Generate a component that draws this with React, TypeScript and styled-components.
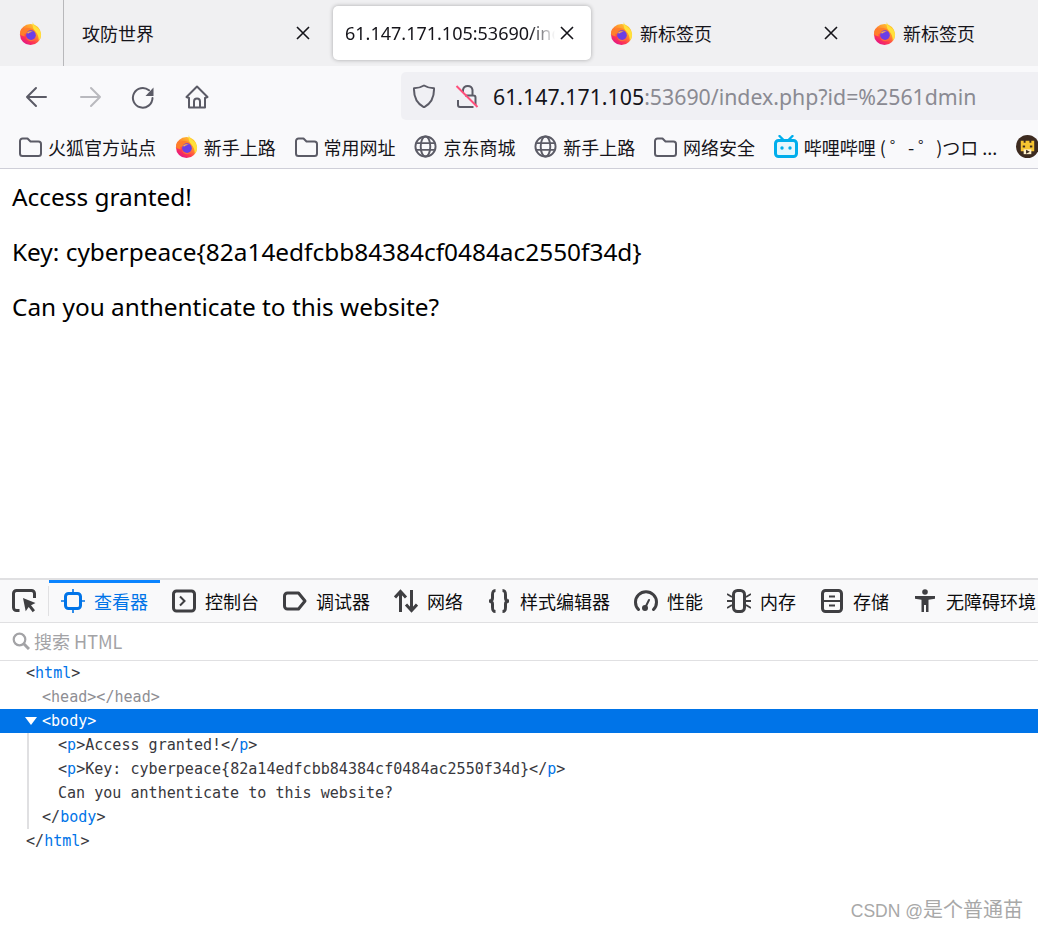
import * as React from 'react';
import styled, { createGlobalStyle } from 'styled-components';

const uiFont = '"Noto Sans", "Noto Sans CJK SC", sans-serif';
const cjkFont = '"Noto Sans CJK SC", "Noto Sans", sans-serif';
const monoFont = '"DejaVu Sans Mono", "Liberation Mono", monospace';

const GlobalStyle = createGlobalStyle`
	html, body {
		margin: 0;
		padding: 0;
		background: #fff;
	}
	svg {
		display: block;
		flex: none;
	}
`;

const Page = styled.div`
	position: relative;
	width: 1038px;
	height: 929px;
	overflow: hidden;
	display: flex;
	flex-direction: column;
	font-family: ${uiFont};
`;

/* browser chrome */
const TabStrip = styled.div`
	display: flex;
	flex: none;
	height: 66px;
	background: #f0f0f2;
	color: #15141a;
	font-family: ${cjkFont};
	font-size: 18px;
`;
const PinnedTab = styled.div`
	width: 64px;
	flex: none;
	display: flex;
	align-items: center;
	padding-left: 19px;
	box-sizing: border-box;
	border-right: 1px solid #b8b8bb;
`;
const Tab = styled.div<{ $width: number; $pad: number }>`
	width: ${(p) => p.$width}px;
	box-sizing: border-box;
	padding: 0 21px 0 ${(p) => p.$pad}px;
	display: flex;
	align-items: center;
	flex: none;
	gap: 7px;
`;
const ActiveTab = styled.div`
	width: 258px;
	height: 54px;
	margin: 6px 0 0 2px;
	padding: 0 17px 0 12px;
	box-sizing: border-box;
	flex: none;
	display: flex;
	align-items: center;
	background: #fff;
	border-radius: 5px;
	box-shadow: 0 0 4px rgba(0, 0, 0, 0.3);
`;
const ActiveTitle = styled.span`
	flex: 1;
	min-width: 0;
	margin-right: 5px;
	overflow: hidden;
	white-space: nowrap;
	font-family: ${uiFont};
	font-size: 18px;
	mask-image: linear-gradient(to right, #000 88%, transparent);
`;
const TabTitle = styled.span`
	flex: 1;
	white-space: nowrap;
`;
const NavBar = styled.div`
	display: flex;
	flex: none;
	align-items: flex-start;
	height: 66px;
	box-sizing: border-box;
	background: #f9f9fb;
	padding: 6px 0 0 24px;
`;
const NavIcons = styled.div`
	display: flex;
	gap: 29.7px;
	margin-top: 13px;
`;
const UrlBar = styled.div`
	width: 637px;
	height: 48px;
	margin-left: auto;
	padding-left: 11px;
	box-sizing: border-box;
	display: flex;
	align-items: center;
	gap: 19px;
	background: #f0f0f4;
	border-radius: 5px 0 0 5px;
`;
const UrlText = styled.div`
	margin-left: -5px;
	font-size: 21.3px;
	color: #15141a;
	white-space: nowrap;
`;
const UrlDim = styled.span`
	color: #8a8a92;
`;
const BookmarkBar = styled.div`
	display: flex;
	flex: none;
	align-items: center;
	gap: 18.8px;
	height: 37px;
	box-sizing: border-box;
	padding: 0 0 7px 19px;
	background: #f9f9fb;
	border-bottom: 1px solid #cfcfd8;
	color: #15141a;
	font-family: ${cjkFont};
	font-size: 18px;
	white-space: nowrap;
`;
const Bookmark = styled.div`
	display: flex;
	flex: none;
	align-items: center;
	gap: 6px;
`;

/* page body */
const Content = styled.div`
	flex: none;
	height: 409px;
	padding: 0 12px;
	box-sizing: border-box;
	font-size: 24.4px;
	color: #000;
`;
const Para = styled.p`
	margin: 0;
	height: 55px;
	line-height: 55px;
`;

/* devtools */
const DevTools = styled.div`
	flex: 1;
	display: flex;
	flex-direction: column;
	border-top: 2px solid #e0e0e2;
	background: #fff;
`;
const ToolBar = styled.div`
	display: flex;
	flex: none;
	height: 43px;
	box-sizing: border-box;
	background: #f9f9fa;
	border-bottom: 1px solid #e0e0e2;
	color: #0c0c0d;
	font-family: ${cjkFont};
	font-size: 18px;
	white-space: nowrap;
`;
const PickButton = styled.div`
	width: 49px;
	height: 30px;
	flex: none;
	margin-top: 6px;
	padding-left: 12px;
	box-sizing: border-box;
	display: flex;
	align-items: center;
	border-right: 1px solid #e0e0e2;
`;
const ToolTab = styled.div<{ $active?: boolean }>`
	display: flex;
	flex: none;
	align-items: center;
	gap: 9px;
	padding: 0 12px;
	color: ${(p) => (p.$active ? '#0074e8' : 'inherit')};
	box-shadow: ${(p) => (p.$active ? 'inset 0 3px 0 #0a84ff' : 'none')};
`;
const SearchRow = styled.div`
	display: flex;
	flex: none;
	align-items: center;
	gap: 4px;
	height: 38px;
	box-sizing: border-box;
	padding: 0 0 2px 12px;
	border-bottom: 1px solid #e0e0e2;
	color: #a3a3a6;
	font-family: ${cjkFont};
	font-size: 18px;
`;
const Tree = styled.div`
	font-family: ${monoFont};
	font-size: 15.05px;
	color: #38383d;
`;
const Row = styled.div<{ $indent: number; $selected?: boolean }>`
	height: 24px;
	line-height: 24px;
	padding-left: ${(p) => p.$indent}px;
	white-space: pre;
	display: flex;
	align-items: center;
	background: ${(p) => (p.$selected ? '#0074e8' : 'transparent')};
	color: ${(p) => (p.$selected ? '#fff' : 'inherit')};
`;
const Children = styled.div`
	margin-left: 27px;
	border-left: 2px solid #e0e0e2;
`;
const Name = styled.span`
	color: #0074e8;
`;
const Dim = styled.span`
	color: #8e8e93;
`;
const CaretSlot = styled.span`
	width: 17px;
	display: flex;
`;
const Watermark = styled.div`
	position: absolute;
	right: 15px;
	bottom: 6px;
	font-family: "Liberation Sans", "Noto Sans CJK SC", sans-serif;
	font-size: 20px;
	color: #a8a8a8;
`;
const WatermarkLatin = styled.span`
	font-size: 17.5px;
`;

const Fox = ({ size = 23 }: { size?: number }) => {
	const id = React.useId();
	return (
		<svg width={size} height={size} viewBox="0 0 24 24">
			<defs>
				<linearGradient id={`${id}a`} x1="0.9" y1="0.15" x2="0.3" y2="1">
					<stop offset="0" stopColor="#ffc92e" />
					<stop offset="0.4" stopColor="#ff8a2e" />
					<stop offset="0.72" stopColor="#ff3750" />
					<stop offset="1" stopColor="#e31587" />
				</linearGradient>
			</defs>
			<circle cx="12" cy="13" r="11" fill={`url(#${id}a)`} />
			<path d="M14.500 0c.2 2.600 2.200 4.200 4.600 6 2.600 2 3.900 4.500 3.900 7 0 2.500-.8 4.800-2.300 6.500-.1-4-1.200-7.300-3.700-9.800-1.900-1.800-3.500-5.400-2.500-9.700z" fill="#ffe13a" />
			<path d="M1.200 10c.4-1.400 1.200-2.900 2.300-4l.8 2.300C6 6.500 9 6 11.500 6.500c2.800.5 5 2.300 6 4.700-2-1.500-4.500-1.800-6.500-1.200-1 .3-1.800.9-2.300 1.700l-3 .9.300 2.500-4.800-1.500z" fill="#ff7f2a" />
			<circle cx="12.500" cy="13.700" r="5" fill="#6b3ee6" />
			<path d="M8.500 11c1.500-1.500 4.300-2 6.400-.7-1.800 0-3.900.6-5.600 2z" fill="#ffb347" />
			<path d="M7 15c.7 3 3 5 5.800 5 2.700 0 5-1.600 5.700-4.300-1 1.800-3.200 3-5.600 3-2.600 0-4.900-1.500-5.900-3.700z" fill="#ff6a3c" />
		</svg>
	);
};

const Close = () => (
	<svg width="14" height="14" viewBox="0 0 14 14" fill="none" stroke="#15141a" strokeWidth="1.600">
		<path d="M1 1l12 12M13 1L1 13" />
	</svg>
);

const Back = () => (
	<svg width="24" height="24" viewBox="0 0 24 24" fill="none" stroke="#5b5b66" strokeWidth="2" strokeLinecap="round" strokeLinejoin="round">
		<path d="M3 12h19M12 3l-9 9 9 9" />
	</svg>
);
const Forward = () => (
	<svg width="24" height="24" viewBox="0 0 24 24" fill="none" stroke="#b9b9be" strokeWidth="2" strokeLinecap="round" strokeLinejoin="round">
		<path d="M22 12H3M13 3l9 9-9 9" />
	</svg>
);
const Reload = () => (
	<svg width="24" height="24" viewBox="0 0 24 24" fill="none">
		<path d="M21.500 13a9.800 9.800 0 1 1-3.500-7.700" stroke="#5b5b66" strokeWidth="2" strokeLinecap="round" />
		<path d="M22.500 2.500V11h-8z" fill="#5b5b66" />
	</svg>
);
const Home = () => (
	<svg width="24" height="24" viewBox="0 0 24 24" fill="none" stroke="#5b5b66" strokeWidth="2" strokeLinejoin="round">
		<path d="M12 1.500L1.500 12l2.500 1v9.500h16V13l2.500-1z" />
		<path d="M9 22.500V16.500a3 3 0 0 1 6 0v6" />
	</svg>
);
const Shield = () => (
	<svg width="24" height="24" viewBox="0 0 24 24" fill="none" stroke="#5b5b66" strokeWidth="2" strokeLinejoin="round">
		<path d="M12 1.500c3 1.800 6.500 2.700 10 2.800.3 8-1.500 14.500-10 19-8.500-4.500-10.300-11-10-19 3.500-.1 7-1 10-2.800z" />
	</svg>
);
const BrokenLock = () => (
	<svg width="24" height="24" viewBox="0 0 24 24" fill="none">
		<path d="M8 9V6a4.800 4.800 0 0 1 9.500 0v5.500M10 11.500h8.500a2 2 0 0 1 2 2v7.500M18.500 23H5a2 2 0 0 1-2-2v-5" stroke="#5b5b66" strokeWidth="2" />
		<path d="M1.500 2l21 21" stroke="#ff4f7b" strokeWidth="2" />
	</svg>
);
const Folder = () => (
	<svg width="23" height="20" viewBox="0 0 23 20" fill="none" stroke="#5b5b66" strokeWidth="2" strokeLinejoin="round">
		<path d="M1 4a2.500 2.500 0 0 1 2.500-2.500h5l3 3h8A2.500 2.500 0 0 1 22 7v9.500a2.500 2.500 0 0 1-2.500 2.500h-16A2.500 2.500 0 0 1 1 16.500z" />
	</svg>
);
const Globe = () => (
	<svg width="23" height="23" viewBox="0 0 24 24" fill="none" stroke="#5b5b66" strokeWidth="2">
		<circle cx="12" cy="12" r="10.500" />
		<ellipse cx="12" cy="12" rx="5" ry="10.500" />
		<path d="M2 8.500h20M2 15.500h20" />
	</svg>
);
const Bili = () => (
	<svg width="24" height="23" viewBox="0 0 24 23">
		<path d="M5.500 1l4.500 4.500M18.500 1L14 5.500" stroke="#00aeec" strokeWidth="2.400" strokeLinecap="round" />
		<rect x="1.500" y="5.500" width="21" height="16" rx="3" fill="#e6f7fd" stroke="#00aeec" strokeWidth="3" />
		<circle cx="8" cy="13" r="1.700" fill="#00aeec" />
		<circle cx="16" cy="13" r="1.700" fill="#00aeec" />
	</svg>
);
const TigerBadge = () => (
	<svg width="23" height="23" viewBox="0 0 24 24">
		<circle cx="12" cy="12" r="12" fill="#3d2b20" />
		<path d="M5 6h3v2h2V6h4v2h2V6h3v11H5z" fill="#f7c531" />
		<rect x="7" y="11" width="2.500" height="2" fill="#3d2b20" />
		<rect x="14.500" y="11" width="2.500" height="2" fill="#3d2b20" />
		<path d="M8 15h8v5H8z" fill="#fff1c9" />
		<path d="M10.500 15.500l4 2-4 2z" fill="#3d2b20" />
	</svg>
);

/* devtools toolbar icons */
const dark = '#3f3f42';
const PickIcon = () => (
	<svg width="24" height="24" viewBox="0 0 24 24" fill="none">
		<path d="M7.500 21.500H4.500a3 3 0 0 1-3-3v-14a3 3 0 0 1 3-3h15a3 3 0 0 1 3 3v4.500" stroke={dark} strokeWidth="3" />
		<path d="M11 9l12.500 5-4.500 2.200 4 5-2.300 2-4-5.200-3 4.200z" fill={dark} />
	</svg>
);
const InspectorIcon = () => (
	<svg width="24" height="24" viewBox="0 0 24 24" fill="none" stroke="#0074e8" strokeWidth="3">
		<rect x="4.500" y="4.500" width="15" height="15" rx="3" />
		<path d="M12 0v3.500M12 20.500V24M0 12h3.500M20.500 12H24" strokeWidth="1.600" />
	</svg>
);
const ConsoleIcon = () => (
	<svg width="24" height="24" viewBox="0 0 24 24" fill="none" stroke={dark} strokeWidth="3">
		<rect x="1.500" y="2" width="21" height="20" rx="3" />
		<path d="M8 7.500l4.500 4.500L8 16.500" strokeWidth="2" />
	</svg>
);
const DebuggerIcon = () => (
	<svg width="24" height="24" viewBox="0 0 24 24" fill="none" stroke={dark} strokeWidth="3" strokeLinejoin="round">
		<path d="M4.500 4h11L22 12l-6.500 8h-11a3 3 0 0 1-3-3V7a3 3 0 0 1 3-3z" />
	</svg>
);
const NetworkIcon = () => (
	<svg width="24" height="24" viewBox="0 0 24 24" fill="none" stroke={dark} strokeWidth="3">
		<path d="M6.500 23V3M1 8.500l5.500-6 5.500 6M17.500 1v20M12 15.500l5.500 6 5.500-6" />
	</svg>
);
const StyleIcon = () => (
	<svg width="24" height="24" viewBox="0 0 24 24" fill="none" stroke={dark} strokeWidth="3">
		<path d="M8.500 1.500C5.500 1.500 5.500 3.500 5.500 6v3c0 2-1.300 3-3.500 3 2.200 0 3.500 1 3.500 3v3c0 2.500 0 4.500 3 4.500M15.500 1.500c3 0 3 2 3 4.500v3c0 2 1.300 3 3.500 3-2.200 0-3.500 1-3.500 3v3c0 2.500 0 4.500-3 4.500" />
	</svg>
);
const PerfIcon = () => (
	<svg width="24" height="24" viewBox="0 0 24 24" fill="none" stroke={dark} strokeWidth="3" strokeLinecap="round">
		<path d="M4.500 20.500a10.500 10.500 0 1 1 15 0" />
		<circle cx="11" cy="19" r="3" fill={dark} stroke="none" />
		<path d="M11.500 18l3.500-7" strokeWidth="2" />
	</svg>
);
const MemoryIcon = () => (
	<svg width="24" height="24" viewBox="0 0 24 24" fill="none" stroke={dark} strokeWidth="3">
		<rect x="6.500" y="1.500" width="11" height="21" rx="4" />
		<path d="M0 5l5 3M0 12h5M0 19l5-3M19 8l5-3M19 12h5M19 16l5 3" strokeWidth="1.800" />
	</svg>
);
const StorageIcon = () => (
	<svg width="24" height="24" viewBox="0 0 24 24" fill="none" stroke={dark} strokeWidth="3">
		<rect x="2.500" y="1.500" width="19" height="21" rx="3" />
		<path d="M2.500 12h19M9 7.500h6M9 16.500h6" strokeWidth="2" />
	</svg>
);
const AccessIcon = () => (
	<svg width="24" height="24" viewBox="0 0 24 24" fill={dark}>
		<circle cx="12" cy="3" r="2.800" />
		<path d="M2 7h20v2.800l-6.500 1V23h-2.500v-7h-2v7H8.500V10.800L2 9.800z" />
	</svg>
);
const SearchIcon = () => (
	<svg width="18" height="18" viewBox="0 0 18 18" fill="none" stroke="#a3a3a6" strokeWidth="2.200">
		<circle cx="7.500" cy="7.500" r="5.800" />
		<path d="M11.500 11.500l5.500 5.500" strokeWidth="3" />
	</svg>
);
const Caret = () => (
	<svg width="12" height="8" viewBox="0 0 12 8" fill="#fff">
		<path d="M0 0h12L6 8z" />
	</svg>
);

const toolTabs = [
	{ icon: <ConsoleIcon />, label: '控制台' },
	{ icon: <DebuggerIcon />, label: '调试器' },
	{ icon: <NetworkIcon />, label: '网络' },
	{ icon: <StyleIcon />, label: '样式编辑器' },
	{ icon: <PerfIcon />, label: '性能' },
	{ icon: <MemoryIcon />, label: '内存' },
	{ icon: <StorageIcon />, label: '存储' },
	{ icon: <AccessIcon />, label: '无障碍环境' },
];

const bookmarks = [
	{ icon: <Folder />, label: '火狐官方站点' },
	{ icon: <Fox />, label: '新手上路' },
	{ icon: <Folder />, label: '常用网址' },
	{ icon: <Globe />, label: '京东商城' },
	{ icon: <Globe />, label: '新手上路' },
	{ icon: <Folder />, label: '网络安全' },
	{ icon: <Bili />, label: '哔哩哔哩\u00a0( ゜- ゜)つロ ...' },
	{ icon: <TigerBadge />, label: '' },
];

export default function App() {
	return (
		<Page>
			<GlobalStyle />
			<TabStrip>
				<PinnedTab>
					<Fox />
				</PinnedTab>
				<Tab $width={267} $pad={18}>
					<TabTitle>攻防世界</TabTitle>
					<Close />
				</Tab>
				<ActiveTab>
					<ActiveTitle>61.147.171.105:53690/index.php?id=%2561dmin</ActiveTitle>
					<Close />
				</ActiveTab>
				<Tab $width={268} $pad={19}>
					<Fox />
					<TabTitle>新标签页</TabTitle>
					<Close />
				</Tab>
				<Tab $width={179} $pad={14}>
					<Fox />
					<TabTitle>新标签页</TabTitle>
				</Tab>
			</TabStrip>
			<NavBar>
				<NavIcons>
					<Back />
					<Forward />
					<Reload />
					<Home />
				</NavIcons>
				<UrlBar>
					<Shield />
					<BrokenLock />
					<UrlText>
						61.147.171.105<UrlDim>:53690/index.php?id=%2561dmin</UrlDim>
					</UrlText>
				</UrlBar>
			</NavBar>
			<BookmarkBar>
				{bookmarks.map((b, i) => (
					<Bookmark key={i}>
						{b.icon}
						{b.label && <span>{b.label}</span>}
					</Bookmark>
				))}
			</BookmarkBar>
			<Content>
				<Para>Access granted!</Para>
				<Para>Key: cyberpeace{'{'}82a14edfcbb84384cf0484ac2550f34d{'}'}</Para>
				<Para>Can you anthenticate to this website?</Para>
			</Content>
			<DevTools>
				<ToolBar>
					<PickButton>
						<PickIcon />
					</PickButton>
					<ToolTab $active>
						<InspectorIcon />
						<span>查看器</span>
					</ToolTab>
					{toolTabs.map((t) => (
						<ToolTab key={t.label}>
							{t.icon}
							<span>{t.label}</span>
						</ToolTab>
					))}
				</ToolBar>
				<SearchRow>
					<SearchIcon />
					<span>搜索 HTML</span>
				</SearchRow>
				<Tree>
					<Row $indent={26}>&lt;<Name>html</Name>&gt;</Row>
					<Row $indent={42}><Dim>&lt;head&gt;&lt;/head&gt;</Dim></Row>
					<Row $indent={25} $selected>
						<CaretSlot><Caret /></CaretSlot>
						&lt;body&gt;
					</Row>
					<Children>
						<Row $indent={29}>&lt;<Name>p</Name>&gt;Access granted!&lt;/<Name>p</Name>&gt;</Row>
						<Row $indent={29}>&lt;<Name>p</Name>&gt;Key: cyberpeace{'{'}82a14edfcbb84384cf0484ac2550f34d{'}'}&lt;/<Name>p</Name>&gt;</Row>
						<Row $indent={29}>Can you anthenticate to this website?</Row>
						<Row $indent={13}>&lt;/<Name>body</Name>&gt;</Row>
					</Children>
					<Row $indent={26}>&lt;/<Name>html</Name>&gt;</Row>
				</Tree>
			</DevTools>
			<Watermark><WatermarkLatin>CSDN @</WatermarkLatin>是个普通苗</Watermark>
		</Page>
	);
}
